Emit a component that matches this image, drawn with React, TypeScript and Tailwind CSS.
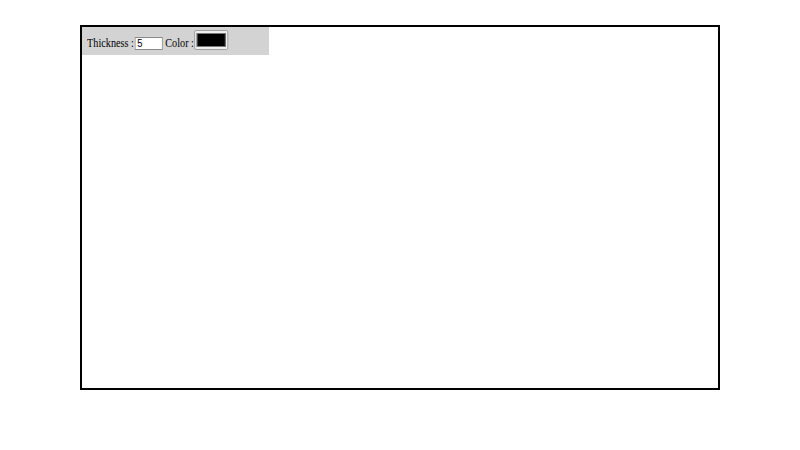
export default function App() {
  return (
    <div className="w-[800px] h-[450px] bg-white pt-[25px] font-['Liberation_Serif',serif] text-black">
      <div className="ml-[80px] w-[640px] h-[365px] border-2 border-black relative bg-white">
        <div className="absolute left-0 top-0 w-[187px] h-[28px] bg-[#d3d3d3] overflow-hidden">
          <div className="w-[220px] h-[28px] origin-left scale-x-[0.85] flex items-start pl-[6px]">
            <span className="mt-[9px] text-[12px] leading-[14px] whitespace-pre">Thickness :</span>
            <div className="ml-[1px] mt-[10px] w-[33px] h-[13px] border border-[#8a8a8a] bg-white flex items-center pl-[2px] text-[11px] leading-[11px] font-['Liberation_Sans',sans-serif]">
              5
            </div>
            <span className="ml-[3px] mt-[9px] text-[12px] leading-[14px] whitespace-pre">Color :</span>
            <div className="ml-0 mt-[3px] w-[40px] h-[20px] border border-[#9a9a9a] rounded-[2px] bg-[#efefef] p-[2px]">
              <div className="w-full h-full border border-[#777777] bg-black" />
            </div>
          </div>
        </div>
      </div>
    </div>
  );
}
